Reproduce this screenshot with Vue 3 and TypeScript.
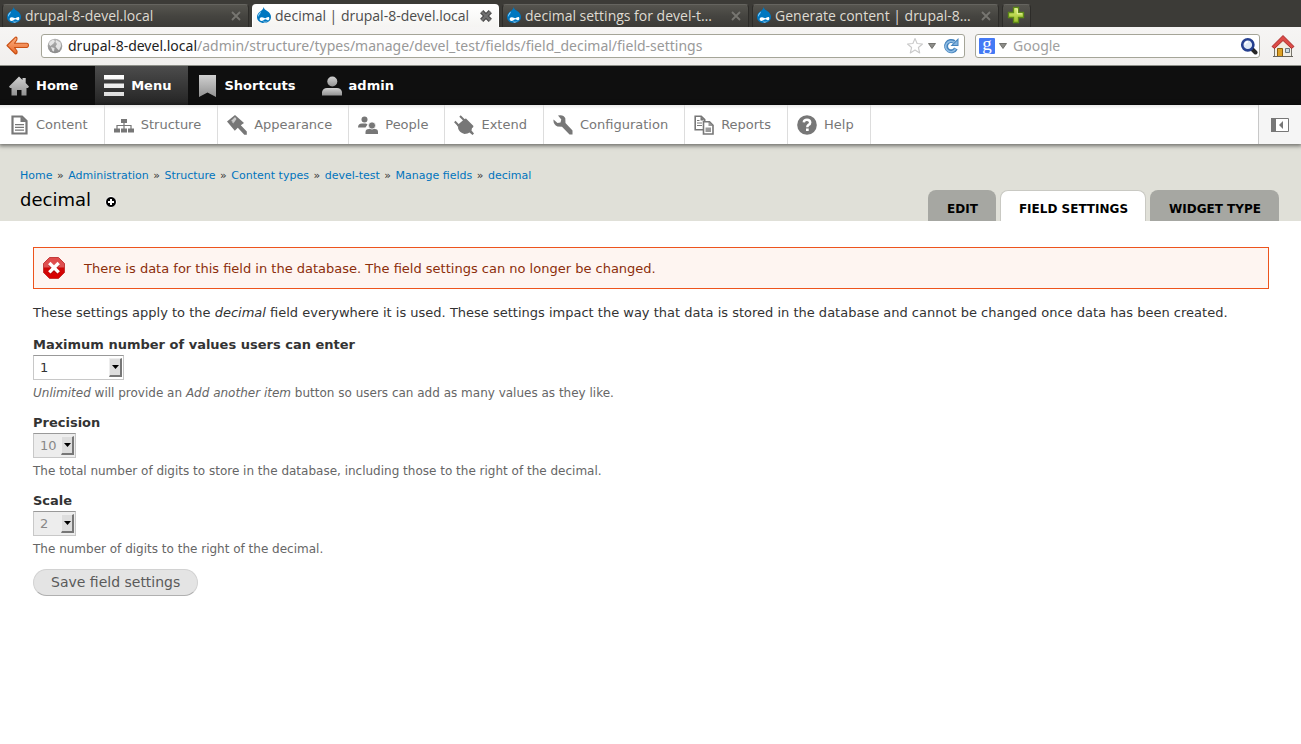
<script setup lang="ts">
import { ref } from 'vue'

interface BrowserTab { title: string; active: boolean }
interface TrayItem { label: string; icon: string }
interface Field { id: string; label: string; value: string; options: string[]; disabled: boolean; wide: boolean }

const browserTabs: BrowserTab[] = [
  { title: 'drupal-8-devel.local', active: false },
  { title: 'decimal | drupal-8-devel.local', active: true },
  { title: 'decimal settings for devel-t…', active: false },
  { title: 'Generate content | drupal-8…', active: false },
]

const tray: TrayItem[] = [
  { label: 'Content', icon: 'content' },
  { label: 'Structure', icon: 'structure' },
  { label: 'Appearance', icon: 'appearance' },
  { label: 'People', icon: 'people' },
  { label: 'Extend', icon: 'extend' },
  { label: 'Configuration', icon: 'configuration' },
  { label: 'Reports', icon: 'reports' },
  { label: 'Help', icon: 'help' },
]

const crumbs: string[] = ['Home', 'Administration', 'Structure', 'Content types', 'devel-test', 'Manage fields', 'decimal']

const fields = ref<Field[]>([
  { id: 'cardinality', label: 'Maximum number of values users can enter', value: '1', options: ['1'], disabled: false, wide: true },
  { id: 'precision', label: 'Precision', value: '10', options: ['10'], disabled: true, wide: false },
  { id: 'scale', label: 'Scale', value: '2', options: ['2'], disabled: true, wide: false },
])
</script>

<template>
  <div class="window">
    <svg class="defs" aria-hidden="true">
      <defs>
        <linearGradient id="silver" x1="0" y1="0" x2="0" y2="1"><stop offset="0" stop-color="#d0d0d0" /><stop offset="1" stop-color="#929292" /></linearGradient>
        <linearGradient id="white" x1="0" y1="0" x2="0" y2="1"><stop offset="0" stop-color="#fff" /><stop offset="1" stop-color="#ddd" /></linearGradient>
        <linearGradient id="orange" x1="0" y1="0" x2="0" y2="1"><stop offset="0" stop-color="#fbb083" /><stop offset="1" stop-color="#ea6a2a" /></linearGradient>
        <linearGradient id="lime" x1="0" y1="0" x2="0" y2="1"><stop offset="0" stop-color="#d9ee74" /><stop offset="1" stop-color="#9cbf2c" /></linearGradient>
        <linearGradient id="red" x1="0" y1="0" x2="0" y2="1"><stop offset="0" stop-color="#e04a4a" /><stop offset=".45" stop-color="#dd5252" /><stop offset=".5" stop-color="#cc0808" /><stop offset="1" stop-color="#dc0000" /></linearGradient>
        <linearGradient id="globe" x1="0" y1="0" x2="0" y2="1"><stop offset="0" stop-color="#b5b5b5" /><stop offset="1" stop-color="#8b8b8b" /></linearGradient>
      </defs>
    </svg>

    <div class="tabstrip">
      <div v-for="tab in browserTabs" :key="tab.title" class="browser-tab" :class="{ active: tab.active }">
        <svg class="drop" width="16" height="17" viewBox="0 0 16 17" aria-hidden="true">
          <path d="M7.500 0C8 2 9.500 3 11.500 4.200 13.500 5.500 15 7.300 15 10.100 15 13.800 12 16 8 16 4 16 1 13.500 1 10 1 7.500 2.500 5.700 4.200 4.600 6.200 3.300 7.200 2 7.500 0Z" fill="#0077c0" />
          <path d="M2 10C1.500 7.500 3.200 5.800 5.100 4.600 4.600 6.800 3.300 7.700 2 10Z" fill="#81ceff" />
          <path d="M4 13.300C3 12 4 10 6 10.200 7.500 10.300 8.200 11.200 9.200 11.200 10.200 11.200 11 10 12.300 10 13.700 10 13.600 12.600 12.400 13.200 11.200 13.500 10.400 12.200 9.500 12.200 8.300 12.200 7 14 5.500 14 4.800 14 4.400 13.800 4 13.300ZM6.500 14.500C8 14.900 10 15 11.500 14.300 10.500 15.600 7.800 15.800 6.500 14.500Z" fill="#fff" />
        </svg>
        <span class="tab-title">{{ tab.title }}</span>
        <button class="tab-close" type="button" aria-label="Close tab">
          <svg v-if="tab.active" width="14" height="14" viewBox="0 0 14 14"><path d="M2.700 2.700l8.600 8.600M11.300 2.700l-8.600 8.600" stroke="#484848" stroke-width="4.600" /><path d="M2.700 2.700l8.600 8.600M11.300 2.700l-8.600 8.600" stroke="#707070" stroke-width="2.400" /></svg>
          <svg v-else width="14" height="14" viewBox="0 0 14 14"><path d="M3 3l8 8M11 3l-8 8" stroke="#777671" stroke-width="1.800" /></svg>
        </button>
      </div>
      <button class="new-tab" type="button" aria-label="New tab">
        <svg width="18" height="18" viewBox="0 0 18 18"><path d="M6.500 1.500h5v5h5v5h-5v5h-5v-5h-5v-5h5z" fill="url(#lime)" stroke="#5e8a17" stroke-width="1.300" /><path d="M7.700 2.800h2.600v5h5" fill="none" stroke="#e8f7a3" /></svg>
      </button>
    </div>

    <div class="navbar">
      <button class="plain back" type="button" aria-label="Back">
        <svg width="24" height="20" viewBox="0 0 24 20"><path d="M1 9.500L9.500 1.200Q10.500 1 11 2L10.800 4 8.500 7.200H21Q22.500 7.300 22.500 9.200T21 11.500H8.500L11 15Q11.500 17.500 9.500 18Z" fill="url(#orange)" stroke="#c94f12" stroke-width="1.100" stroke-linejoin="round" /></svg>
      </button>
      <div class="urlbar">
        <svg width="16" height="16" viewBox="0 0 16 16" aria-hidden="true"><circle cx="8" cy="8" r="7.300" fill="url(#globe)" /><path d="M2.500 4L6 1.500 8 3 6.500 5.500 3.500 8 2 6.500ZM9 2L13.500 4.500 14 8 12 12.500 10 10.500 8.500 8.500 10 6 8.500 4ZM4 9L7.500 10 7 13.500 5.500 13Z" fill="#f0f0f0" opacity=".85" /></svg>
        <div class="url" role="textbox" aria-label="Address"><b>drupal-8-devel.local</b>/admin/structure/types/manage/devel_test/fields/field_decimal/field-settings</div>
        <button class="plain" type="button" aria-label="Bookmark"><svg width="18" height="18" viewBox="0 0 18 18"><path d="M9 1.500L11.100 6.500 16.500 7 12.400 10.500 13.700 16 9 13 4.300 16 5.600 10.500 1.500 7 6.900 6.500Z" fill="#fff" stroke="#cacaca" stroke-width="1.100" stroke-linejoin="round" /></svg></button>
        <button class="plain caret" type="button" aria-label="History"><svg width="8" height="6" viewBox="0 0 8 6"><path d="M.5.500h7L4 5.500z" fill="#8d8d89" stroke="#5f5f5b" stroke-width=".8" /></svg></button>
        <button class="plain reload" type="button" aria-label="Reload"><svg width="18" height="18" viewBox="0 0 18 18"><path d="M12.300 4.900A5.200 5.200 0 1 0 13.900 11.500" fill="none" stroke="#4684bd" stroke-width="4" /><path d="M16.500 1v8H8.500l2.700-2.700L13.700 3.700Z" fill="#4684bd" /><path d="M12 5.300A5.200 5.200 0 1 0 13.600 11.700" fill="none" stroke="#8fbce4" stroke-width="1.600" /><path d="M15.500 3.400V8H11z" fill="#83b3df" /></svg></button>
      </div>
      <div class="searchbar">
        <span class="engine">g</span>
        <button class="plain caret" type="button" aria-label="Search engines"><svg width="8" height="6" viewBox="0 0 8 6"><path d="M.5.500h7L4 5.500z" fill="#8d8d89" stroke="#5f5f5b" stroke-width=".8" /></svg></button>
        <input class="search" type="text" placeholder="Google" aria-label="Search" />
        <button class="plain" type="button" aria-label="Go"><svg width="18" height="18" viewBox="0 0 18 18"><path d="M11.500 11.500l4 4" stroke="#262626" stroke-width="4" stroke-linecap="round" /><circle cx="7.800" cy="7.800" r="5.600" fill="#dfe9f5" stroke="#26408f" stroke-width="2.600" /><path d="M5 7.500Q5.500 5 8 4.800" stroke="#fff" stroke-width="1.500" fill="none" /></svg></button>
      </div>
      <button class="plain home" type="button" aria-label="Home page">
        <svg width="24" height="24" viewBox="0 0 24 24"><path d="M3.500 11.500L12 4l8.500 7.500v11h-17z" fill="#f1eee4" stroke="#77756b" /><path d="M1 12.500L12 1.500l11 11-2.500 2L12 6.500l-8.500 8z" fill="#dc4b47" stroke="#a32020" stroke-width=".9" stroke-linejoin="round" /><path d="M6.500 14.500h5v8h-5z" fill="#dda126" stroke="#8c5d08" /><path d="M14.500 14.500h4v4h-4z" fill="#c9dbe4" stroke="#687780" /><path d="M2 22.500h20" stroke="#66635a" /></svg>
      </button>
    </div>

    <nav class="toolbar" aria-label="Toolbar">
      <a href="#" class="bar-item"><svg class="bar-icon" width="20" height="20" viewBox="0 0 20 20"><path d="M0 10.500L10 .5l3.500 3.500V2h3.200v5L20 10.500 19 12h-1.500v7.500h-5v-5.500H8v5.500H2.500V12H1z" fill="url(#silver)" /></svg>Home</a>
      <a href="#" class="bar-item open"><svg class="bar-icon" width="20" height="21" viewBox="0 0 20 21"><path d="M0 0h20v4.500H0zM0 8.500h20V13H0zM0 17h20v4H0z" fill="url(#white)" /></svg>Menu</a>
      <a href="#" class="bar-item"><svg class="bar-icon" width="20" height="22" viewBox="0 0 20 22"><path d="M2 0h17v22l-8.500-4.500L2 22z" fill="url(#silver)" /></svg>Shortcuts</a>
      <a href="#" class="bar-item"><svg class="bar-icon" width="20" height="20" viewBox="0 0 20 20"><circle cx="10.300" cy="5.500" r="5" fill="url(#silver)" /><path d="M0 19.500V16Q1 12 5 12h10q4 0 5 4v3.500z" fill="url(#silver)" /></svg>admin</a>
    </nav>

    <nav class="tray" aria-label="Administration menu">
      <a v-for="item in tray" :key="item.icon" href="#" class="tray-item">
        <svg class="tray-icon" width="20" height="20" viewBox="0 0 20 20" fill="#777" aria-hidden="true">
          <template v-if="item.icon === 'content'">
            <path d="M3.500 1.500h9.500l4.500 4.500v12.500h-14z" fill="#fff" stroke="#777" stroke-width="2.200" /><path d="M11.500 1v6h6zM6 9h9v1.200H6zM6 11.800h9V13H6zM6 14.600h9v1.200H6z" />
          </template>
          <template v-else-if="item.icon === 'structure'">
            <path d="M7 4h6v4H7zM0 13.500h6v4H0zM7 13.500h6v4H7zM14 13.500h6v4h-6z" /><path d="M10 8v6M3 14v-3.500h14V14" fill="none" stroke="#777" stroke-width="1.200" />
          </template>
          <template v-else-if="item.icon === 'appearance'">
            <path d="M8 0l9 8-3.200 2.200 6 6.300v3.300h-2.500l-6.500-7-3 3L0 6.500z" /><path d="M8 2L4 6l1.500.5-.5 1.200 1.500-.2-.5 1.500L9.500 4z" fill="#ccc" />
          </template>
          <template v-else-if="item.icon === 'people'">
            <circle cx="6.500" cy="4.500" r="3" /><path d="M0 12.500q0-4 4-4h4l1.500 1-2 3zM7.500 19v-2q0-3 3.500-3h6q3 0 3 3v2z" /><circle cx="14" cy="10.500" r="3.600" stroke="#fff" stroke-width=".8" />
          </template>
          <template v-else-if="item.icon === 'extend'">
            <path d="M10.500 4L12 3.500 19.500 11 19 12.500 18 13 17.500 15.500 20 18.500 18.500 20 15.500 17.500 13.500 18.500 10.500 19Q5 17.500 4 13L4.500 10.500 3.500 11.500 3 10.500Z" /><path d="M6.500 12.500L.8 6.500M11.500 6.500L6 1" fill="none" stroke="#777" stroke-width="2" />
          </template>
          <template v-else-if="item.icon === 'configuration'">
            <path d="M.5 4.500L4.500 8 7.500 7.500 8.300 4.500 5 .5Q10.500-.8 12.300 3.300L12.500 8 19.500 15.500V19.500H16.500L9 11.800 4.500 11.500Q0 9.500.5 4.500Z" />
          </template>
          <template v-else-if="item.icon === 'reports'">
            <path d="M1.200 1.200h6l3.500 3.500v10h-9.500z" fill="#fff" stroke="#777" stroke-width="1.600" /><path d="M6.500 1v4.500h4zM3 5h2.500v1H3zM3 7.500h5v1H3zM3 10h5v1H3z" /><path d="M9.500 6.800h6l3.500 3.500v8.700h-9.500z" fill="#fff" stroke="#777" stroke-width="1.600" /><path d="M14.500 6.500V11H19zM11.500 12.500h5.500v4.500h-5.500z" opacity=".75" />
          </template>
          <template v-else>
            <circle cx="10" cy="10" r="9.800" /><path d="M6.800 7.300Q7 4.800 10 4.800t3.200 2.700Q13.200 9 11.500 9.800 10.300 10.500 10.300 12.200" fill="none" stroke="#fff" stroke-width="2.500" /><path d="M9 13.500h2.700V16H9z" fill="#fff" />
          </template>
        </svg>{{ item.label }}
      </a>
      <button class="orientation" type="button" aria-label="Vertical orientation">
        <svg width="18" height="14" viewBox="0 0 18 14"><path d="M.5.500h17v13H.5z" fill="#fff" stroke="#777" /><path d="M0 0h5v14H0zM12 3v8L8 7z" fill="#777" /></svg>
      </button>
    </nav>

    <header class="page-head">
      <nav class="breadcrumb" aria-label="Breadcrumb">
        <template v-for="(crumb, index) in crumbs" :key="crumb"><span v-if="index > 0"> » </span><a href="#">{{ crumb }}</a></template>
      </nav>
      <div class="head-row">
        <h1>decimal</h1>
        <button class="plain add" type="button" aria-label="Add to shortcuts"><svg width="12" height="12" viewBox="0 0 12 12"><circle cx="6" cy="6" r="5.500" fill="#000" stroke="#fff" /><path d="M6 3v6M3 6h6" stroke="#fff" stroke-width="2" /></svg></button>
        <nav class="tabs" aria-label="Primary tabs">
          <a href="#">Edit</a>
          <a href="#" class="active">Field settings</a>
          <a href="#">Widget type</a>
        </nav>
      </div>
    </header>

    <main class="content">
      <div class="message" role="alert">
        <svg width="24" height="24" viewBox="0 0 24 24" aria-hidden="true"><path d="M7.500 1.500h9l6 6v9l-6 6h-9l-6-6v-9z" fill="url(#red)" stroke="#b92222" stroke-width=".8" /><path d="M7.700 8.200l8.600 8.600M16.300 8.200l-8.600 8.600" stroke="#7e0909" stroke-width="3.600" opacity=".55" /><path d="M7.300 7l9.400 9.400M16.700 7l-9.400 9.400" stroke="#fff" stroke-width="3.400" /></svg>
        <span>There is data for this field in the database. The field settings can no longer be changed.</span>
      </div>
      <p class="intro">These settings apply to the <em>decimal</em> field everywhere it is used. These settings impact the way that data is stored in the database and cannot be changed once data has been created.</p>
      <form @submit.prevent>
        <div v-for="field in fields" :key="field.id" class="field">
          <label :for="field.id">{{ field.label }}</label>
          <div class="select" :class="{ wide: field.wide }">
            <select :id="field.id" v-model="field.value" :disabled="field.disabled">
              <option v-for="option in field.options" :key="option">{{ option }}</option>
            </select>
            <span class="arrow"><svg width="7" height="4" viewBox="0 0 7 4"><path d="M0 0h7L3.500 4z" /></svg></span>
          </div>
          <div class="description">
            <template v-if="field.id === 'cardinality'"><em>Unlimited</em> will provide an <em>Add another item</em> button so users can add as many values as they like.</template>
            <template v-else-if="field.id === 'precision'">The total number of digits to store in the database, including those to the right of the decimal.</template>
            <template v-else>The number of digits to the right of the decimal.</template>
          </div>
        </div>
        <button class="save" type="submit">Save field settings</button>
      </form>
    </main>
  </div>
</template>

<style>
body { margin: 0; background: #fff; }
</style>

<style scoped>
* { box-sizing: border-box; }
.window { font: 13px/20px "DejaVu Sans", sans-serif; color: #333; }
.defs { display: block; width: 0; height: 0; }
svg { flex: none; display: block; }
a { text-decoration: none; }
.plain { border: 0; padding: 0; background: none; display: flex; align-items: center; flex: none; }

.tabstrip { display: flex; gap: 3px; height: 27px; padding: 4px 2px 0; background: #3c3b37; font: 14px/20px "Open Sans", "Noto Sans", sans-serif; }
.browser-tab { display: flex; align-items: center; width: 247px; min-width: 0; padding: 0 5px 1px 3px; gap: 3px; color: #dfdbd2; background: linear-gradient(#56554f, #454440 50%, #3c3b37); border: 1px solid #2d2c29; border-top-color: #65645f; border-bottom: 0; border-radius: 4px 4px 0 0; }
.browser-tab.active { color: #4c4c4c; background: linear-gradient(#fff, #f5f4f2); border-color: #fff; }
.tab-title { flex: 1; white-space: nowrap; overflow: hidden; }
.tab-close { display: flex; border: 0; padding: 0; background: none; }
.new-tab { display: flex; align-items: center; justify-content: center; width: 29px; padding: 0 2px 2px 0; background: linear-gradient(#56554f, #3f3e3a); border: 1px solid #2d2c29; border-top-color: #65645f; border-bottom: 0; border-radius: 4px 4px 0 0; }

.navbar { display: flex; align-items: center; height: 39px; padding: 0 6px; background: linear-gradient(#f6f5f4, #f1efed); border-bottom: 1px solid #8d8f88; }
.back { width: 35px; }
.urlbar, .searchbar { display: flex; align-items: center; height: 24px; background: #fff; border: 1px solid #a5a598; border-radius: 3px; }
.urlbar { flex: 1; min-width: 0; padding: 0 4px 0 5px; gap: 4px; }
.url { flex: 1; min-width: 0; padding-left: 1px; overflow: hidden; white-space: nowrap; font: 14px/22px "Noto Sans", "Open Sans", sans-serif; color: #999; }
.url b { font-weight: 400; color: #222; }
.reload { margin-left: 2px; }
.searchbar { width: 285px; margin: 0 11px 0 10px; padding: 0 1px 0 3px; }
.engine { width: 16px; height: 16px; border-radius: 1px; background: #4479f5; color: #fff; font: 19px/11px "Liberation Serif", serif; text-align: center; }
.searchbar .caret { margin: 0 6px 0 4px; }
.search { flex: 1; min-width: 0; border: 0; padding: 0; outline: 0; background: none; font: 14px/22px "Noto Sans", "Open Sans", sans-serif; }
.search::placeholder { color: #a0a0a0; opacity: 1; }

.toolbar { display: flex; height: 39px; background: #0f0f0f; }
.bar-item { display: flex; align-items: center; gap: 7px; padding: 0 17px 0 9px; color: #fff; font-weight: 700; }
.bar-item.open { background: linear-gradient(#4c4c4c, #242424); }

.tray { position: relative; display: flex; height: 39px; background: linear-gradient(#e9e9e9, #fff 4px); box-shadow: 0 1px 4px 1px rgba(0, 0, 0, .5); }
.tray-item { display: flex; align-items: center; gap: 7px; padding: 0 16px 0 9px; color: #777; border-right: 1px solid #ddd; }
.orientation { margin-left: auto; width: 43px; padding: 0 0 0 12px; border: 0; border-left: 1px solid #c8c8c8; background: #f5f5f5; }

.page-head { height: 77px; padding: 21px 22px 0 20px; background: #e0e0d8; }
.breadcrumb { font-size: 11px; line-height: 21px; color: #333; white-space: pre; }
.breadcrumb span { margin: 0 1px; }
.breadcrumb a { color: #0074bd; }
.head-row { display: flex; height: 35px; align-items: flex-start; }
h1 { margin: 3px 0 0; font-size: 18px; line-height: 22px; font-weight: 400; color: #000; }
.add { margin: 10px 0 0 14px; }
.tabs { display: flex; gap: 4px; margin: 4px 0 0 auto; }
.tabs a { height: 31px; padding: 9px 18px 0 19px; font-size: 12px; line-height: 20px; font-weight: 700; text-transform: uppercase; color: #000; background: #a6a7a2; border-radius: 8px 8px 0 0; }
.tabs .active { background: #fff; border: 1px solid #c9c9c3; border-bottom: 0; padding: 8px 17px 0 18px; }

.content { padding: 26px 32px 24px 33px; }
.message { display: flex; align-items: center; gap: 18px; height: 42px; padding: 0 8px; color: #8c2e0b; background: #fef5f1; border: 1px solid #ed541d; }
.message span { padding-top: 1px; }
.intro { margin: 14px 0 12px; }
.field { margin-bottom: 11px; }
.field label { display: block; font-weight: 700; }
.select { position: relative; width: 43px; height: 25px; }
.select.wide { width: 91px; }
.select select { display: block; width: 100%; height: 100%; appearance: none; margin: 0; padding: 0 0 0 6px; border: 1px solid #c8c8c8; border-top-color: #999; border-radius: 0; background: #fff; color: #333; font: 13px/20px "DejaVu Sans", sans-serif; opacity: 1; }
.select select:disabled { background: #ededed; color: #888; }
.arrow { position: absolute; top: 3px; right: 2px; width: 13px; height: 19px; display: flex; align-items: center; justify-content: center; background: #ddd; border: 1px solid #eee; border-right: 2px solid #777; border-bottom: 2px solid #777; pointer-events: none; }
.description { margin-top: 4px; font-size: 12px; line-height: 18px; color: #666; }
.save { display: block; height: 27px; padding: 0 17px 2px; border: 1px solid #d2d2d2; border-bottom-color: #b0b0b0; border-radius: 14px; background: #e4e4e4; color: #5a5a5a; font: 14px/20px "DejaVu Sans", sans-serif; }
</style>
